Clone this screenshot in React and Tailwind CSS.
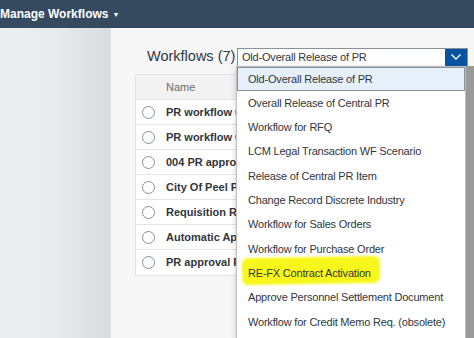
const rows = [
  "PR workflow Contract Release",
  "PR workflow Central Release",
  "004 PR approval workflow",
  "City Of Peel PR Release",
  "Requisition Release Strategy",
  "Automatic Approval of PR",
  "PR approval Process",
];

const options = [
  "Old-Overall Release of PR",
  "Overall Release of Central PR",
  "Workflow for RFQ",
  "LCM Legal Transaction WF Scenario",
  "Release of Central PR Item",
  "Change Record Discrete Industry",
  "Workflow for Sales Orders",
  "Workflow for Purchase Order",
  "RE-FX Contract Activation",
  "Approve Personnel Settlement Document",
  "Workflow for Credit Memo Req. (obsolete)",
];

function Chevron() {
  return (
    <svg width="12" height="8" viewBox="0 0 12 8" fill="none">
      <path d="M1.5 1.5 L6 6 L10.5 1.5" stroke="white" strokeWidth="1.4" />
    </svg>
  );
}

export default function App() {
  return (
    <div className="relative w-[474px] h-[338px] overflow-hidden bg-[#f7f7f7] font-['Liberation_Sans',Arial,sans-serif] text-[#32363a]">
      {/* Shell bar */}
      <div className="h-[28px] bg-[#354a5f] flex items-center">
        <span className="text-white font-bold text-[12px] leading-none">Manage Workflows</span>
        <span className="text-white text-[7px] ml-[4px] leading-none">▼</span>
      </div>

      <div className="flex h-[310px]">
        {/* Left side panel */}
        <div className="w-[111px] bg-gradient-to-r from-[#eceef0] via-[#e8eaec] to-[#d9dcdf]" />

        {/* Main content */}
        <div className="flex-1 pl-[24px] pt-[20px] bg-[#f7f7f7]">
          <div className="flex items-center h-[18px]">
            <span className="shrink-0 w-[102px] pl-[12px] text-[14.5px] text-[#32363a] whitespace-nowrap">Workflows (7)</span>
            <div className="flex h-[19px] w-[231px] shrink-0 bg-white border border-[#89919a]">
              <span className="flex-1 pl-[4px] text-[11px] tracking-[-0.2px] leading-[17px] whitespace-nowrap">Old-Overall Release of PR</span>
              <div className="w-[22px] bg-[#0854a0] flex items-center justify-center">
                <Chevron />
              </div>
            </div>
          </div>

          {/* Table (its right part sits under the open list) */}
          <div className="mt-[8px] w-[101px] overflow-hidden bg-white border border-r-0 border-[#e5e5e5]">
            <div className="h-[25px] bg-[#f2f2f2] border-b border-[#e5e5e5] flex items-center pl-[30px] text-[11px] text-[#6a6d70]">
              Name
            </div>
            {rows.map((r) => (
              <div key={r} className="h-[25px] border-b border-[#e5e5e5] last:border-b-0 flex items-center">
                <div className="shrink-0 ml-[6px] w-[13px] h-[13px] rounded-full border border-[#89919a] bg-white" />
                <span className="ml-[11px] text-[11px] font-bold whitespace-nowrap">{r}</span>
              </div>
            ))}
          </div>
        </div>
      </div>

      {/* Dropdown list */}
      <div className="absolute left-[236px] top-[66px] flex">
        <div className="w-[230px] h-[272px] bg-white border border-[#bfbfbf] border-b-0 shadow-[0_2px_6px_rgba(0,0,0,0.2)]">
          {options.map((o, i) => (
            <div
              key={o}
              className={
                i === 0
                  ? "h-[24px] flex items-center pl-[10px] text-[11px] tracking-[-0.2px] bg-[#e5f0fa] border border-[#89919a]"
                  : "relative h-[24.3px] flex items-center pl-[11px] text-[11px] tracking-[-0.2px]"
              }
            >
              {o === "RE-FX Contract Activation" && (
                <div className="absolute left-[5px] top-[-4px] w-[138px] h-[27px] bg-[#f8f71c] rounded-[6px] -rotate-1 blur-[1px]" />
              )}
              <span className="relative whitespace-nowrap">{o}</span>
            </div>
          ))}
        </div>
        <div className="w-[8px] h-[272px] bg-[#9a9a9a]" />
      </div>
    </div>
  );
}
